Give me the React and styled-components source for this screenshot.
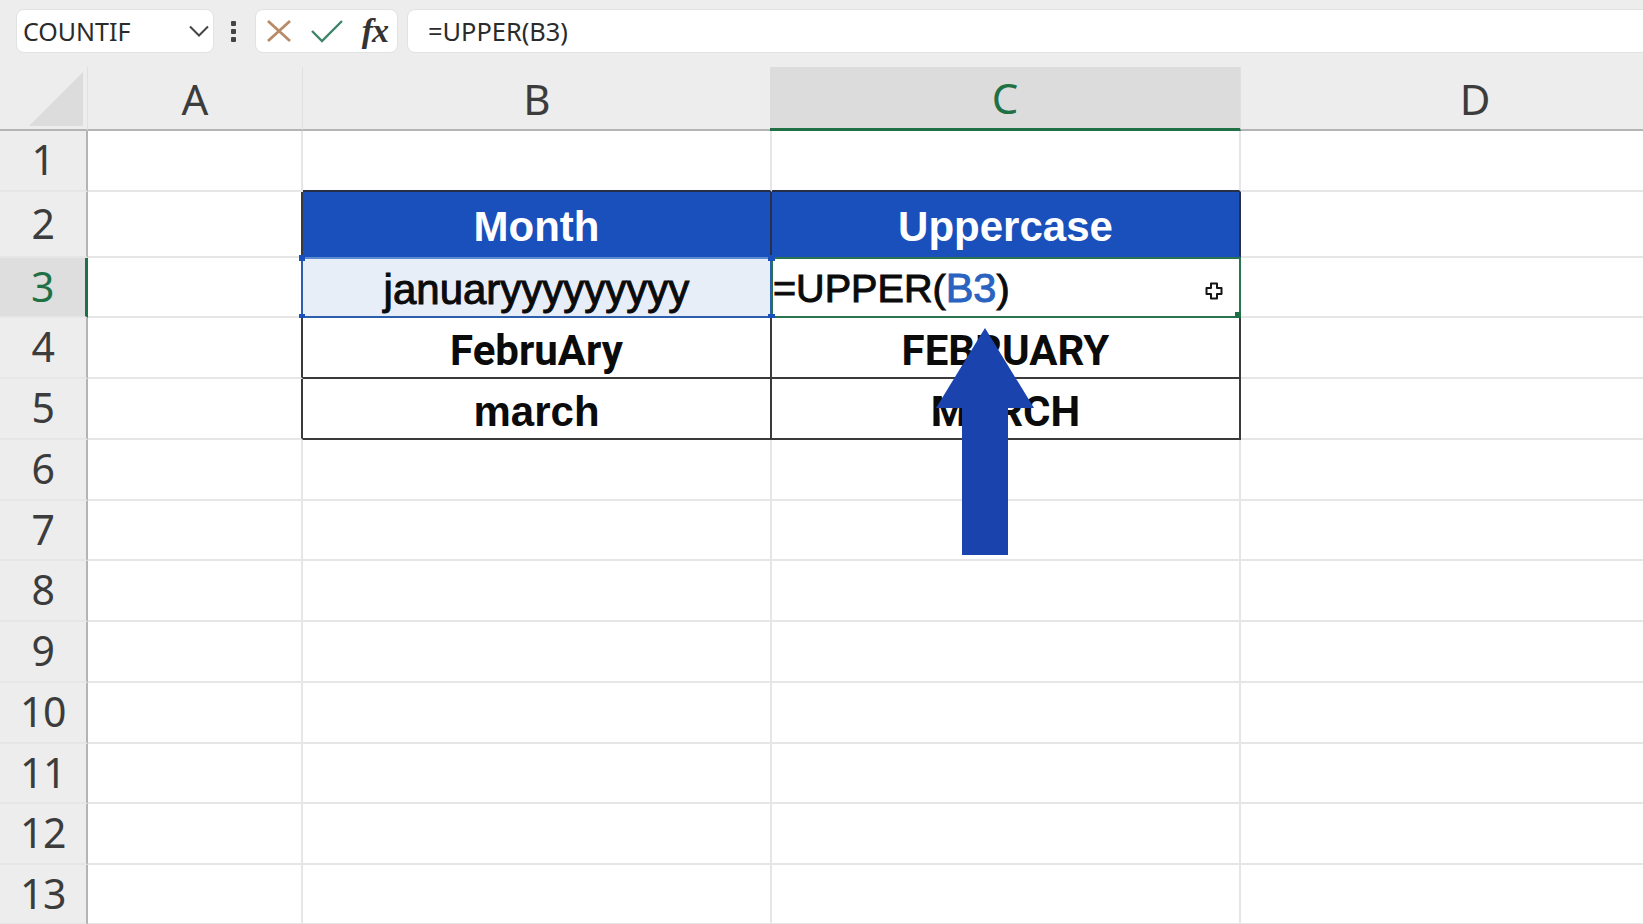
import React from "react";
import styled, { createGlobalStyle } from "styled-components";

const Global = createGlobalStyle`
  html, body { margin: 0; padding: 0; background: #ededed; overflow: hidden; }
  * { box-sizing: border-box; }
`;

const Page = styled.div`
  position: relative;
  width: 1643px;
  height: 924px;
  overflow: hidden;
  background: #ededed;
  font-family: "Noto Sans", "Open Sans", sans-serif;
`;

const FormulaRow = styled.div`
  display: flex;
  align-items: flex-start;
  height: 67px;
  padding: 9px 0 0 16px;
`;

const Box = styled.div`
  display: flex;
  align-items: center;
  height: 44px;
  background: #fff;
  border: 1px solid #e2e2e2;
  border-radius: 8px;
`;

const NameBox = styled(Box)`
  width: 198px;
  padding: 0 2px 0 6px;
  justify-content: space-between;
  font-size: 25px;
  color: #2b2b2b;
`;

const Dots = styled.div`
  display: flex;
  flex-direction: column;
  align-items: center;
  gap: 3px;
  width: 41px;
  padding: 12px 2px 0 0;
  height: 44px;
`;

const Dot = styled.span`
  width: 5px;
  height: 5px;
  border-radius: 1px;
  background: #444;
`;

const IconBox = styled(Box)`
  width: 143px;
  padding: 0 9px 0 10px;
  justify-content: space-between;
`;

const Fx = styled.span`
  font-family: "Liberation Serif", serif;
  font-style: italic;
  font-weight: 700;
  font-size: 34px;
  line-height: 1;
  letter-spacing: -1px;
  color: #333;
`;

const FormulaBox = styled(Box)`
  flex: 1;
  margin-left: 9px;
  margin-right: -20px;
  padding-left: 20px;
  font-size: 25.4px;
  color: #2b2b2b;
`;

const Sheet = styled.div`
  display: grid;
  grid-template-columns: 88px 215px 469px 469px 469px;
  grid-template-rows: 64px 61px 66px 60px 61px 61px 61px 60px 61px 61px 61px 60px 61px 60px;
`;

const Corner = styled.div`
  display: flex;
  align-items: flex-end;
  justify-content: flex-end;
  padding: 0 4px 3px 0;
  border-bottom: 2px solid #b4b4b4;
  border-right: 1px solid #e0e0e0;
`;

const ColHead = styled.div`
  display: flex;
  align-items: center;
  justify-content: center;
  font-size: 42px;
  margin-left: ${(p) => (p.$active ? "-2px" : "0")};
  color: ${(p) => (p.$active ? "#1f7145" : "#3c3c3c")};
  background: ${(p) => (p.$active ? "#dcdcdc" : "transparent")};
  border-right: 1px solid #e0e0e0;
  border-bottom: ${(p) => (p.$active ? "3px solid #1f7145" : "2px solid #b4b4b4")};
`;

const RowHead = styled.div`
  display: flex;
  align-items: center;
  justify-content: center;
  padding-bottom: 3px;
  font-size: 41px;
  letter-spacing: -0.5px;
  color: ${(p) => (p.$active ? "#1f7145" : "#3c3c3c")};
  background: ${(p) => (p.$active ? "#dedede" : "transparent")};
  border-right: ${(p) => (p.$active ? "3px solid #1f7145" : "2px solid #b4b4b4")};
  border-bottom: 2px solid #e6e6e6;
`;

const Cell = styled.div`
  position: relative;
  display: flex;
  align-items: center;
  justify-content: center;
  padding-top: ${(p) => (p.$bold || p.$bg ? 6 : 0)}px;
  background: ${(p) => p.$bg || "#fff"};
  border-right: 2px solid ${(p) => p.$right || "#e6e6e6"};
  border-bottom: 2px solid ${(p) => p.$bottom || "#e6e6e6"};
  font-family: ${(p) => (p.$roboto ? "Roboto" : '"Liberation Sans"')}, Arial, sans-serif;
  font-size: 42px;
  color: ${(p) => p.$color || "#0b0b0b"};
  font-weight: ${(p) => (p.$bold ? 700 : 400)};
`;

const EditText = styled.span`
  position: absolute;
  left: 1px;
  top: 5px;
  font-size: 39.6px;
  line-height: 50px;
  white-space: nowrap;
  -webkit-text-stroke: 1px #0b0b0b;
`;

const Ref = styled.span`
  font-size: 41.5px;
  color: #2a63c0;
  -webkit-text-stroke: 1px #2a63c0;
`;

const Medium = styled.span`
  -webkit-text-stroke: 1px #0b0b0b;
`;

const Selection = styled.div`
  position: absolute;
  left: ${(p) => p.$left}px;
  right: -2px;
  top: -1px;
  bottom: -2px;
  border: 2px solid ${(p) => p.$color};
  border-top-color: ${(p) => p.$top || p.$color};
  pointer-events: none;
`;

const Handle = styled.span`
  position: absolute;
  width: ${(p) => p.$size || 6}px;
  height: ${(p) => p.$size || 6}px;
  background: ${(p) => p.$color};
  ${(p) => p.$x}: -4px;
  ${(p) => p.$y}: -4px;
`;

const CursorIcon = styled.svg`
  position: absolute;
  right: 16px;
  top: 24px;
`;

const ArrowIcon = styled.svg`
  position: absolute;
  left: 935px;
  top: 328px;
`;

const DARK = "#3a3a3a";
const BLUE = "#1a50bb";

const rows = [1, 2, 3, 4, 5, 6, 7, 8, 9, 10, 11, 12, 13];
const table = {
  2: { b: "Month", c: "Uppercase" },
  4: { b: "FebruAry", c: "FEBRUARY" },
  5: { b: "march", c: "MARCH" },
};

function tableCells(r) {
  if (r === 1) {
    return (
      <>
        <Cell $bottom="#26304a" />
        <Cell $bottom="#26304a" />
      </>
    );
  }
  if (r === 2) {
    return (
      <>
        <Cell $bg={BLUE} $color="#fff" $bold $right="#26304a" $bottom={BLUE}>{table[2].b}</Cell>
        <Cell $bg={BLUE} $color="#fff" $bold $right="#26304a" $bottom={BLUE}>{table[2].c}</Cell>
      </>
    );
  }
  if (r === 3) {
    return (
      <>
        <Cell $bg="#e8eef8" $right="#e8eef8" $bottom="#e8eef8">
          <Medium>januaryyyyyyyyy</Medium>
          <Selection $left={-2} $color="#2c5fab" $top="#5d8bd0">
            <Handle $color="#1a50bb" $x="left" $y="top" />
            <Handle $color="#1a50bb" $x="left" $y="bottom" />
            <Handle $color="#1a50bb" $x="right" $y="top" />
            <Handle $color="#1a50bb" $x="right" $y="bottom" />
          </Selection>
        </Cell>
        <Cell $right={DARK} $bottom={DARK}>
          <EditText>
            =UPPER(<Ref>B3</Ref>)
          </EditText>
          <Selection $left={-1} $color="#2a7350">
            <Handle $color="#1a50bb" $x="left" $y="top" />
            <Handle $color="#1a50bb" $x="left" $y="bottom" />
            <Handle $color="#1f7145" $size={8} $x="right" $y="bottom" />
          </Selection>
          <CursorIcon width="18" height="18" viewBox="0 0 18 18">
            <path
              d="M6 1.5h6v4.5h4.5v6H12v4.5H6V12H1.5V6H6z"
              fill="#fff"
              stroke="#151515"
              strokeWidth="2"
              strokeLinejoin="round"
            />
          </CursorIcon>
        </Cell>
      </>
    );
  }
  if (r === 4 || r === 5) {
    return (
      <>
        <Cell $bold $roboto={r === 4} $right={DARK} $bottom={DARK}>{table[r].b}</Cell>
        <Cell $bold $roboto $right={DARK} $bottom={DARK}>{table[r].c}</Cell>
      </>
    );
  }
  return (
    <>
      <Cell />
      <Cell />
    </>
  );
}

export default function App() {
  return (
    <Page>
      <Global />
      <FormulaRow>
        <NameBox>
          COUNTIF
          <svg width="24" height="14" viewBox="0 0 24 14">
            <path d="M3 2.5l9 9 9-9" fill="none" stroke="#444" strokeWidth="2" />
          </svg>
        </NameBox>
        <Dots>
          <Dot />
          <Dot />
          <Dot />
        </Dots>
        <IconBox>
          <svg width="26" height="24" viewBox="0 0 26 24">
            <path d="M2 2l22 20M24 2L2 22" fill="none" stroke="#b98a68" strokeWidth="2.8" />
          </svg>
          <svg width="34" height="24" viewBox="0 0 34 24">
            <path d="M2 12l10 10L32 2" fill="none" stroke="#3f8468" strokeWidth="2.4" />
          </svg>
          <Fx>fx</Fx>
        </IconBox>
        <FormulaBox>=UPPER(B3)</FormulaBox>
      </FormulaRow>
      <Sheet>
        <Corner>
          <svg width="54" height="54" viewBox="0 0 54 54">
            <polygon points="0,54 54,0 54,54" fill="#dcdcdc" />
          </svg>
        </Corner>
        <ColHead>A</ColHead>
        <ColHead>B</ColHead>
        <ColHead $active>C</ColHead>
        <ColHead>D</ColHead>
        {rows.map((r) => (
          <React.Fragment key={r}>
            <RowHead $active={r === 3}>{r}</RowHead>
            <Cell $right={r >= 2 && r <= 5 ? DARK : undefined} />
            {tableCells(r)}
            <Cell />
          </React.Fragment>
        ))}
      </Sheet>
      <ArrowIcon width="100" height="228" viewBox="0 0 100 228">
        <path d="M50 0L99 80H73V227H27V80H1z" fill="#1a43ad" />
      </ArrowIcon>
    </Page>
  );
}
